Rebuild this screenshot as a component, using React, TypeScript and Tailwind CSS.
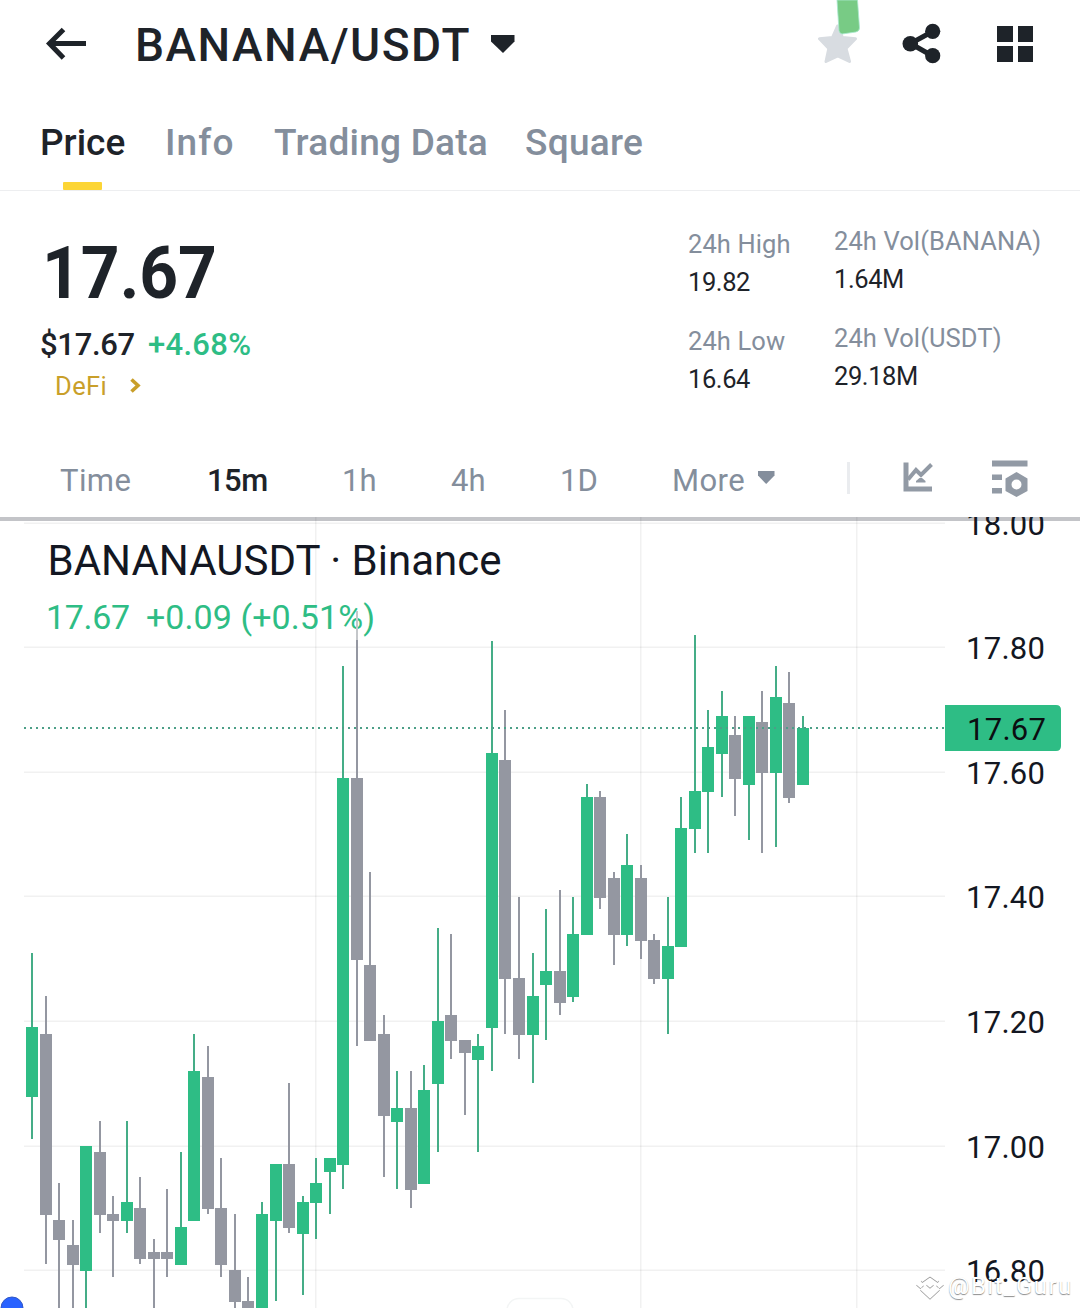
type Candle = [x: number, high: number, top: number, bottom: number, low: number, up: 0 | 1]

const UP = '#2ebd85'
const DOWN = '#9497a1'

// x is the left edge of the body, the other values are page y
const candles: Candle[] = [
  [26, 953, 1027, 1097, 1139, 1],
  [40, 996, 1034, 1215, 1264, 0],
  [53, 1183, 1220, 1240, 1308, 0],
  [67, 1220, 1245, 1265, 1308, 0],
  [80, 1146, 1146, 1271, 1308, 1],
  [94, 1121, 1152, 1215, 1233, 0],
  [107, 1196, 1214, 1221, 1277, 0],
  [121, 1121, 1202, 1221, 1233, 1],
  [134, 1177, 1208, 1259, 1264, 0],
  [148, 1239, 1252, 1259, 1308, 0],
  [161, 1189, 1252, 1259, 1277, 0],
  [175, 1152, 1227, 1265, 1265, 1],
  [188, 1034, 1071, 1221, 1221, 1],
  [202, 1046, 1077, 1209, 1214, 0],
  [215, 1158, 1208, 1265, 1277, 0],
  [229, 1214, 1270, 1302, 1308, 0],
  [242, 1277, 1301, 1308, 1308, 0],
  [256, 1202, 1214, 1308, 1308, 1],
  [270, 1164, 1164, 1221, 1301, 1],
  [283, 1083, 1164, 1228, 1233, 0],
  [297, 1196, 1202, 1234, 1295, 1],
  [310, 1158, 1183, 1203, 1239, 1],
  [324, 1158, 1158, 1172, 1214, 1],
  [337, 666, 778, 1165, 1189, 1],
  [351, 640, 778, 960, 1046, 0],
  [364, 872, 965, 1041, 1041, 0],
  [378, 1015, 1034, 1116, 1177, 0],
  [391, 1071, 1108, 1122, 1189, 1],
  [405, 1071, 1108, 1190, 1208, 0],
  [418, 1065, 1090, 1184, 1184, 1],
  [432, 928, 1021, 1084, 1152, 1],
  [445, 934, 1015, 1041, 1059, 0],
  [459, 1040, 1040, 1053, 1115, 0],
  [472, 1034, 1046, 1060, 1152, 1],
  [486, 641, 753, 1028, 1071, 1],
  [499, 710, 760, 979, 1034, 0],
  [513, 897, 978, 1035, 1059, 0],
  [527, 953, 996, 1035, 1083, 1],
  [540, 909, 971, 985, 1040, 1],
  [554, 890, 971, 1003, 1015, 0],
  [567, 897, 934, 997, 1002, 1],
  [581, 784, 797, 935, 935, 1],
  [594, 791, 797, 898, 909, 0],
  [608, 872, 878, 935, 965, 0],
  [621, 834, 865, 935, 946, 1],
  [635, 865, 878, 941, 959, 0],
  [648, 934, 940, 979, 984, 0],
  [662, 897, 946, 979, 1034, 1],
  [675, 797, 828, 947, 947, 1],
  [689, 635, 791, 829, 853, 1],
  [702, 710, 747, 792, 853, 1],
  [716, 691, 716, 754, 797, 1],
  [729, 716, 735, 779, 816, 0],
  [743, 716, 716, 785, 840, 1],
  [756, 691, 722, 773, 853, 0],
  [770, 666, 697, 773, 847, 1],
  [783, 672, 703, 798, 803, 0],
  [797, 716, 728, 785, 785, 1],
]

const prices = [
  { label: '18.00', y: 523 },
  { label: '17.80', y: 647 },
  { label: '17.60', y: 772 },
  { label: '17.40', y: 896 },
  { label: '17.20', y: 1021 },
  { label: '17.00', y: 1146 },
  { label: '16.80', y: 1270 },
]

function Header() {
  return (
    <header className="relative flex h-[89px] items-center pb-[2px] text-[#1e2329]">
      <svg className="ml-[45px] h-[34px] w-[42px]" viewBox="45 27 42 34" fill="none" stroke="currentColor" strokeWidth="5">
        <path d="M86 43.5H50M63.5 29.5L49.5 43.5L63.5 58" />
      </svg>
      <h1 className="ml-[48px] w-[355px] whitespace-nowrap pt-[2px] text-[46px] font-medium leading-none tracking-[1.5px]">BANANA/USDT</h1>
      <svg className="h-[18px] w-[25px]" viewBox="0 0 25 18" fill="currentColor">
        <path d="M1 0H24.5V6.5L13 18L1 6.5Z" />
      </svg>
      <svg className="ml-[303px] h-[40px] w-[40px]" viewBox="818 24 40 40" fill="#d8dce1" stroke="#d8dce1" strokeWidth="3" strokeLinejoin="round">
        <path d="M837.5 26L842.5 37.5L855.5 38.8L846 48.5L849.5 61.5L837.8 55.8L826 61.5L828.8 48.5L819.5 38.8L832.5 37.5Z" />
      </svg>
      <svg className="ml-[44px] h-[42px] w-[40px]" viewBox="902 23 40 42" fill="currentColor">
        <path d="M932.5 31.5L910.5 43.5L932.5 56" fill="none" stroke="currentColor" strokeWidth="5" />
        <circle cx="910.3" cy="43.7" r="7.8" />
        <circle cx="932.7" cy="31.3" r="7.6" />
        <circle cx="932.7" cy="55.7" r="7.6" />
      </svg>
      <div className="ml-[55px] grid w-[36px] grid-cols-2 gap-x-[5px] gap-y-[4px]">
        {[0, 1, 2, 3].map((i) => (
          <span key={i} className="h-[16px] bg-[#1e2329]" />
        ))}
      </div>
      {/* marker stroke over the star */}
      <svg className="absolute left-[834px] top-0 h-[38px] w-[30px]" viewBox="834 0 30 38">
        <path d="M837 0H857.500L859.500 28Q859.500 31 856 32L842 34Q839.500 33.500 839 31Z" fill="#78cb85" stroke="#a9e8cf" strokeWidth="0.8" />
      </svg>
    </header>
  )
}

function Tabs() {
  return (
    <nav className="relative flex h-[102px] items-center border-b border-[#edeef0] pl-[40px] pt-[5px] text-[37px] font-medium leading-none text-[#848e9c]">
      <span className="w-[125px] text-[#1e2329]">Price</span>
      <span className="w-[109px] tracking-[1.1px]">Info</span>
      <span className="w-[251px] whitespace-nowrap tracking-[0.25px]">Trading Data</span>
      <span className="tracking-[0.3px]">Square</span>
      <span className="absolute bottom-0 left-[63px] h-[8px] w-[39px] rounded-[1px] bg-[#fcd535]" />
    </nav>
  )
}

function Stat({ label, value }: { label: string; value: string }) {
  return (
    <div className="flex h-[97px] flex-col gap-[12px] whitespace-nowrap text-[25.500px] leading-[26px]">
      <span className="tracking-[0.1px] text-[#848e9c]">{label}</span>
      <span className="tracking-[-0.400px] text-[#1e2329]">{value}</span>
    </div>
  )
}

function Summary() {
  return (
    <section className="flex h-[239px]">
      <div className="w-[688px] pl-[40px] pt-[46px]">
        <div className="ml-[2px] origin-left scale-x-[0.94] text-[72px] font-bold leading-[73px] text-[#1e2329]">17.67</div>
        <div className="mt-[17px] flex text-[31px] font-medium leading-[36px]">
          <span className="w-[108px] tracking-[-0.300px] text-[#1e2329]">$17.67</span>
          <span className="tracking-[0.3px] text-[#2ebd85]">+4.68%</span>
        </div>
        <div className="mt-[7px] flex items-center pl-[15px] text-[#c99f2a]">
          <span className="w-[74px] text-[25.500px] leading-[32px] tracking-[0.4px]">DeFi</span>
          <svg className="mb-px h-[16px] w-[13px]" viewBox="0 0 13 16" fill="none" stroke="currentColor" strokeWidth="3.600">
            <path d="M2.500 1.500L9 7.500L2.500 13.500" />
          </svg>
        </div>
      </div>
      <div className="w-[146px] pt-[40px]">
        <Stat label="24h High" value="19.82" />
        <Stat label="24h Low" value="16.64" />
      </div>
      <div className="pt-[37px]">
        <Stat label="24h Vol(BANANA)" value="1.64M" />
        <Stat label="24h Vol(USDT)" value="29.18M" />
      </div>
    </section>
  )
}

function Intervals() {
  return (
    <div className="flex h-[87px] items-center pl-[60px] pt-[13px] text-[31px] leading-none text-[#848e9c]">
      <span className="w-[147px] tracking-[0.4px]">Time</span>
      <span className="w-[135px] font-medium tracking-[-0.500px] text-[#1e2329]">15m</span>
      <span className="w-[109px]">1h</span>
      <span className="w-[109px]">4h</span>
      <span className="w-[112px]">1D</span>
      <span className="w-[86px] tracking-[0.4px]">More</span>
      <svg className="mb-[6px] h-[13px] w-[17px]" viewBox="0 0 17 13" fill="#848e9c">
        <path d="M0 0H16.500V4.500L8.200 13L0 4.500Z" />
      </svg>
      <span className="mb-[4px] ml-[72px] h-[32px] w-[3px] bg-[#eaecef]" />
      <svg className="mb-[6px] ml-[52px] h-[32px] w-[32px]" viewBox="902 462 32 32" fill="#929aa5">
        <path d="M903.500 463.500H908.500V487.500H932V492.500H903.500Z" />
        <path d="M908 480.500L916 471L921 476L931.500 465.500" fill="none" stroke="#929aa5" strokeWidth="4" />
        <path d="M916 483.500H925.500V482L922 479H919.500L916 482Z" />
      </svg>
      <svg className="mb-[2px] ml-[56px] h-[38px] w-[38px]" viewBox="990 460 38 38" fill="#929aa5">
        <path d="M992 460.500H1027.500V466.500H992ZM992 474.500H1002V480H992ZM992 488H1002V493.500H992Z" />
        <path fillRule="evenodd" d="M1016.500 472L1027.500 478.500V491L1016.500 497L1005.500 491V478.500ZM1016.500 479.500A5 5 0 1 0 1016.500 489.500A5 5 0 1 0 1016.500 479.500Z" />
      </svg>
    </div>
  )
}

function Chart() {
  return (
    <svg className="block h-[791px] w-full font-[Roboto,sans-serif]" viewBox="0 517 1080 791">
      <rect x="0" y="517" width="1080" height="4" fill="#c3c4c8" />
      <g fill="#000" fillOpacity="0.055">
        {prices.map((p) => (
          <rect key={p.label} x="24" y={p.y - 0.5} width="921" height="1.5" />
        ))}
        {[315, 640, 856].map((x) => (
          <rect key={x} x={x} y="517" width="1.500" height="791" />
        ))}
      </g>

      {candles.map(([x, high, top, bottom, low, up]) => (
        <g key={x} fill={up ? UP : DOWN}>
          <rect x={x + 5} y={high} width="2" height={low - high} fill={up ? '#45ad87' : DOWN} />
          <rect x={x} y={top} width="12" height={bottom - top} />
        </g>
      ))}
      <line x1="24" y1="728" x2="945" y2="728" stroke="#4c9f87" strokeWidth="2" strokeDasharray="2 4" />

      <text x="47.500" y="575" fontSize="42" fill="#131722" textLength="454">BANANAUSDT · Binance</text>
      <g fontSize="34" fill={UP}>
        <text x="46" y="629" textLength="84">17.67</text>
        <text x="146" y="629" textLength="229">+0.09 (+0.51%)</text>
      </g>
      <rect x="356" y="611" width="2" height="29" fill="#c4c7ca" />

      <g fontSize="31" fill="#131722">
        {prices.map((p) => (
          <text key={p.label} x="966" y={p.y + 12} textLength="79">{p.label}</text>
        ))}
      </g>
      <path d="M945 705H1056Q1061 705 1061 710V746Q1061 751 1056 751H945Z" fill={UP} />
      <text x="967" y="740" fontSize="31" fill="#0b0e11" textLength="79">17.67</text>

      <rect x="507" y="1298.500" width="66" height="30" rx="12" fill="#fff" stroke="#f3f5f5" strokeWidth="1.500" />
      <circle cx="12" cy="1308" r="11" fill="#2962ff" stroke="#3157c4" strokeWidth="1" />
    </svg>
  )
}

function Watermark() {
  return (
    <div className="absolute bottom-[9px] left-[915px] flex items-center">
      <svg className="h-[26px] w-[30px] drop-shadow-[0_1px_0.500px_rgba(0,0,0,0.4)]" viewBox="0 0 30 26" fill="none" stroke="#fff" strokeWidth="2.600">
        <path d="M6.500 8L15 2L23.500 8M2 10.500L5.500 13.500L8 11M22 11L24.500 13.500L28 10.500M12 10.500L15 13L18 10.500M6 15.500L15 24L24 15.500" />
      </svg>
      <span className="ml-[3px] text-[24px] leading-none tracking-[1.400px] text-white [text-shadow:0_1px_1px_rgba(0,0,0,0.45)]">@Bit_Guru</span>
    </div>
  )
}

export default function App() {
  return (
    <div className="relative h-[1308px] w-[1080px] overflow-hidden bg-white font-[Roboto,sans-serif]">
      <Header />
      <Tabs />
      <Summary />
      <Intervals />
      <Chart />
      <Watermark />
    </div>
  )
}
